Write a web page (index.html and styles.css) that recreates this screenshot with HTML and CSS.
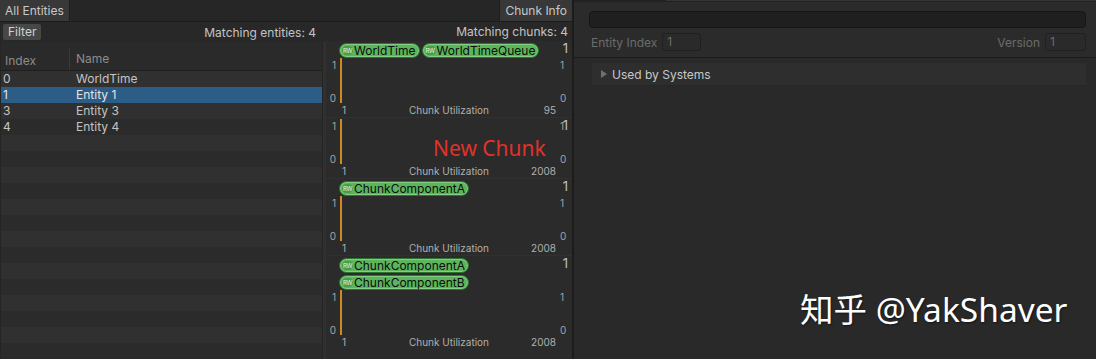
FILE: index.html
```html
<!DOCTYPE html>
<html lang="en">
<head>
    <meta charset="UTF-8">
    <title>Entity Debugger</title>
    <link rel="stylesheet" href="styles.css">
</head>
<body>
    <div class="window">
        <div class="panel-left">
            <div class="tabbar">
                <div class="tab">All Entities</div>
                <div class="tab tab-right">Chunk Info</div>
            </div>
            <div class="panes">
                <div class="entities">
                    <div class="toolbar">
                        <button class="filter">Filter</button>
                        <span class="count">Matching entities: 4</span>
                    </div>
                    <div class="list">
                        <div class="list-head">
                            <div class="col-index">Index</div>
                            <div class="col-name">Name</div>
                        </div>
                        <div class="row"><span class="col-index">0</span><span class="col-name">WorldTime</span></div>
                        <div class="row selected"><span class="col-index">1</span><span class="col-name">Entity 1</span></div>
                        <div class="row"><span class="col-index">3</span><span class="col-name">Entity 3</span></div>
                        <div class="row"><span class="col-index">4</span><span class="col-name">Entity 4</span></div>
                        <div class="row"></div>
                        <div class="row"></div>
                        <div class="row"></div>
                        <div class="row"></div>
                        <div class="row"></div>
                        <div class="row"></div>
                        <div class="row"></div>
                        <div class="row"></div>
                        <div class="row"></div>
                        <div class="row"></div>
                        <div class="row"></div>
                        <div class="row"></div>
                        <div class="row"></div>
                        <div class="row"></div>
                    </div>
                </div>
                <div class="scroll-track"></div>
                <div class="chunks">
                    <div class="toolbar toolbar-chunks">
                        <span class="count">Matching chunks: 4</span>
                    </div>

                    <div class="chunk">
                        <span class="chunk-count">1</span>
                        <div class="tags">
                            <span class="tag"><i class="rw">RW</i>WorldTime</span>
                            <span class="tag"><i class="rw">RW</i>WorldTimeQueue</span>
                        </div>
                        <div class="graph">
                            <div class="axis"><span>1</span><span>0</span></div>
                            <div class="bar"></div>
                            <div class="plot"></div>
                            <div class="axis axis-right"><span>1</span><span>0</span></div>
                        </div>
                        <div class="chunk-foot"><span>1</span><span class="foot-title">Chunk Utilization</span><span class="cap">95</span></div>
                    </div>

                    <div class="chunk">
                        <span class="chunk-count">1</span>
                        <div class="graph">
                            <div class="axis"><span>1</span><span>0</span></div>
                            <div class="bar"></div>
                            <div class="plot"></div>
                            <div class="axis axis-right"><span>1</span><span>0</span></div>
                            <span class="new-chunk">New Chunk</span>
                        </div>
                        <div class="chunk-foot"><span>1</span><span class="foot-title">Chunk Utilization</span><span class="cap">2008</span></div>
                    </div>

                    <div class="chunk">
                        <span class="chunk-count">1</span>
                        <div class="tags">
                            <span class="tag"><i class="rw">RW</i>ChunkComponentA</span>
                        </div>
                        <div class="graph">
                            <div class="axis"><span>1</span><span>0</span></div>
                            <div class="bar"></div>
                            <div class="plot"></div>
                            <div class="axis axis-right"><span>1</span><span>0</span></div>
                        </div>
                        <div class="chunk-foot"><span>1</span><span class="foot-title">Chunk Utilization</span><span class="cap">2008</span></div>
                    </div>

                    <div class="chunk">
                        <span class="chunk-count">1</span>
                        <div class="tags">
                            <span class="tag"><i class="rw">RW</i>ChunkComponentA</span>
                        </div>
                        <div class="tags">
                            <span class="tag"><i class="rw">RW</i>ChunkComponentB</span>
                        </div>
                        <div class="graph">
                            <div class="axis"><span>1</span><span>0</span></div>
                            <div class="bar"></div>
                            <div class="plot"></div>
                            <div class="axis axis-right"><span>1</span><span>0</span></div>
                        </div>
                        <div class="chunk-foot"><span>1</span><span class="foot-title">Chunk Utilization</span><span class="cap">2008</span></div>
                    </div>
                </div>
            </div>
        </div>

        <div class="inspector">
            <div class="inspector-top"><span class="top-tab"></span></div>
            <div class="inspector-head">
                <div class="search"></div>
                <div class="id-row">
                    <span class="label">Entity Index</span>
                    <span class="field">1</span>
                    <span class="label version">Version</span>
                    <span class="field field-version">1</span>
                </div>
            </div>
            <div class="inspector-body">
                <div class="foldout"><span class="arrow"></span>Used by Systems</div>
            </div>
        </div>

        <div class="watermark">知乎 @YakShaver</div>
    </div>
</body>
</html>
```

FILE: styles.css
```css
body {
    margin: 0;
    background: #282828;
    font-family: Inter, 'Liberation Sans', sans-serif;
    font-size: 12px;
    color: #c4c4c4;
}
.window {
    position: relative;
    display: flex;
    width: 1096px;
    height: 359px;
    overflow: hidden;
}

/* left: entity list + chunk info */
.panel-left {
    width: 572px;
    display: flex;
    flex-direction: column;
    border-right: 2px solid #1c1c1c;
}
.tabbar {
    height: 21px;
    display: flex;
    background: #262626;
    border-bottom: 1px solid #1c1c1c;
}
.tab {
    padding: 0 5px;
    line-height: 21px;
    background: #383838;
    border-right: 1px solid #1f1f1f;
    color: #c8c8c8;
}
.tab-right {
    margin-left: auto;
    border-right: none;
    border-left: 1px solid #1f1f1f;
}
.panes {
    display: flex;
    flex: 1;
    min-height: 0;
}
.entities {
    width: 322px;
    display: flex;
    flex-direction: column;
}
.scroll-track {
    width: 3px;
    margin-top: 20px;
    background: #303030;
    border-left: 1px solid #242424;
}
.toolbar {
    height: 20px;
    display: flex;
    align-items: center;
    padding: 0 6px 0 3px;
    flex-shrink: 0;
}
.filter {
    height: 16px;
    padding: 0 5px;
    background: #474747;
    border: none;
    border-radius: 2px;
    color: #d2d2d2;
    font: inherit;
    line-height: 16px;
}
.count {
    margin-left: auto;
}
.list {
    flex: 1;
    background: #2a2a2a;
    border-left: 1px solid #252525;
    overflow: hidden;
}
.list-head {
    height: 28px;
    display: flex;
    align-items: flex-end;
    border-bottom: 1px solid #1e1e1e;
    color: #8c8c8c;
}
.list-head .col-index {
    height: 21px;
    line-height: 24px;
    padding-left: 4px;
    border-right: 1px solid #3a3a3a;
}
.list-head .col-name {
    line-height: 21px;
    padding-bottom: 1px;
}
.col-index {
    width: 69px;
    padding-left: 2px;
    box-sizing: border-box;
}
.col-name {
    padding-left: 6px;
}
.row {
    height: 16px;
    line-height: 16px;
    display: flex;
    background: #2b2b2b;
}
.row:nth-child(even) {
    background: #303030;
}
.row.selected {
    background: #2c5d87;
    color: #e4e4e4;
}

/* chunk column */
.chunks {
    flex: 1;
    display: flex;
    flex-direction: column;
    background: #303030;
}
.toolbar-chunks {
    height: 19px;
    padding: 0 4px 0 0;
    background: #282828;
}
.chunk {
    position: relative;
    padding-top: 1px;
    margin-bottom: 1px;
    background: #2b2b2b;
}
.chunk:last-child {
    flex: 1;
    margin-bottom: 0;
}
.chunk-count {
    position: absolute;
    top: 0;
    right: 4px;
    font-size: 13px;
    line-height: 14px;
    color: #c0c0c0;
}
.tags {
    height: 16px;
    display: flex;
    align-items: center;
    gap: 2px;
    padding-left: 13px;
}
.tags + .tags {
    margin-top: 1px;
}
.tag {
    height: 15px;
    box-sizing: border-box;
    display: inline-flex;
    align-items: center;
    gap: 1px;
    padding: 0 3px 0 2px;
    background: #5cb55c;
    border: 1px solid #2c7430;
    box-shadow: inset 0 0 0 1px #80d080;
    border-radius: 8px;
    color: #0c0c0c;
    font-size: 12px;
    line-height: 13px;
}
.rw {
    width: 11px;
    height: 9px;
    border-radius: 5px;
    background: #4a9c4a;
    color: #e6f6e6;
    font-style: normal;
    font-size: 6px;
    line-height: 9px;
    text-align: center;
    letter-spacing: -0.3px;
}
.graph {
    position: relative;
    height: 45px;
    display: flex;
}
.axis {
    width: 14px;
    box-sizing: border-box;
    padding: 1px 4px 0 0;
    margin-bottom: -1px;
    display: flex;
    flex-direction: column;
    justify-content: space-between;
    align-items: flex-end;
    font-size: 10px;
    line-height: 12px;
    color: #a4a4a4;
}
.axis-right {
    padding: 1px 0 0 2px;
    align-items: flex-start;
}
.bar {
    width: 2px;
    background: #d08b1e;
}
.plot {
    flex: 1;
}
.new-chunk {
    position: absolute;
    left: 107px;
    top: 19px;
    font-family: 'Noto Sans', sans-serif;
    font-size: 21px;
    line-height: 21px;
    color: #e0322b;
}
.chunk-foot {
    height: 14px;
    display: grid;
    grid-template-columns: 1fr auto 1fr;
    align-items: center;
    padding: 0 16px;
    font-size: 10px;
    color: #b0b0b0;
}
.cap {
    text-align: right;
}

/* right: inspector */
.inspector {
    flex: 1;
    display: flex;
    flex-direction: column;
    background: #292929;
}
.inspector-top {
    height: 2px;
    background: #222;
    display: flex;
}
.top-tab {
    margin-left: 92px;
    flex: 1;
    background: #353535;
    height: 1px;
}
.inspector-head {
    padding: 9px 10px 6px 15px;
    background: #2b2b2b;
    border-bottom: 1px solid #1b1b1b;
}
.search {
    height: 17px;
    box-sizing: border-box;
    background: #1f1f1f;
    border: 1px solid #161616;
    border-radius: 4px;
}
.id-row {
    margin-top: 5px;
    height: 18px;
    display: flex;
    align-items: center;
    padding-left: 2px;
    color: #6c6c6c;
}
.field {
    width: 39px;
    height: 18px;
    box-sizing: border-box;
    margin-left: 5px;
    padding-left: 4px;
    line-height: 16px;
    background: #2a2a2a;
    border: 1px solid #202020;
    border-radius: 3px;
}
.field-version {
    width: 41px;
}
.version {
    margin-left: auto;
}
.inspector-body {
    flex: 1;
    padding: 5px 10px 0 18px;
}
.foldout {
    height: 22px;
    display: flex;
    align-items: center;
    padding-left: 9px;
    background: #2e2e2e;
    border-bottom: 1px solid #262626;
    color: #c8c8c8;
}
.arrow {
    width: 0;
    height: 0;
    margin-right: 5px;
    border-left: 6px solid #707070;
    border-top: 4px solid transparent;
    border-bottom: 4px solid transparent;
}
.watermark {
    position: absolute;
    left: 800px;
    top: 292px;
    font-family: 'Noto Sans', 'Noto Sans CJK SC', sans-serif;
    font-size: 33.5px;
    line-height: 34px;
    color: #ffffff;
    text-shadow: 1px 1px 2px rgba(0, 0, 0, 0.5);
}
```
